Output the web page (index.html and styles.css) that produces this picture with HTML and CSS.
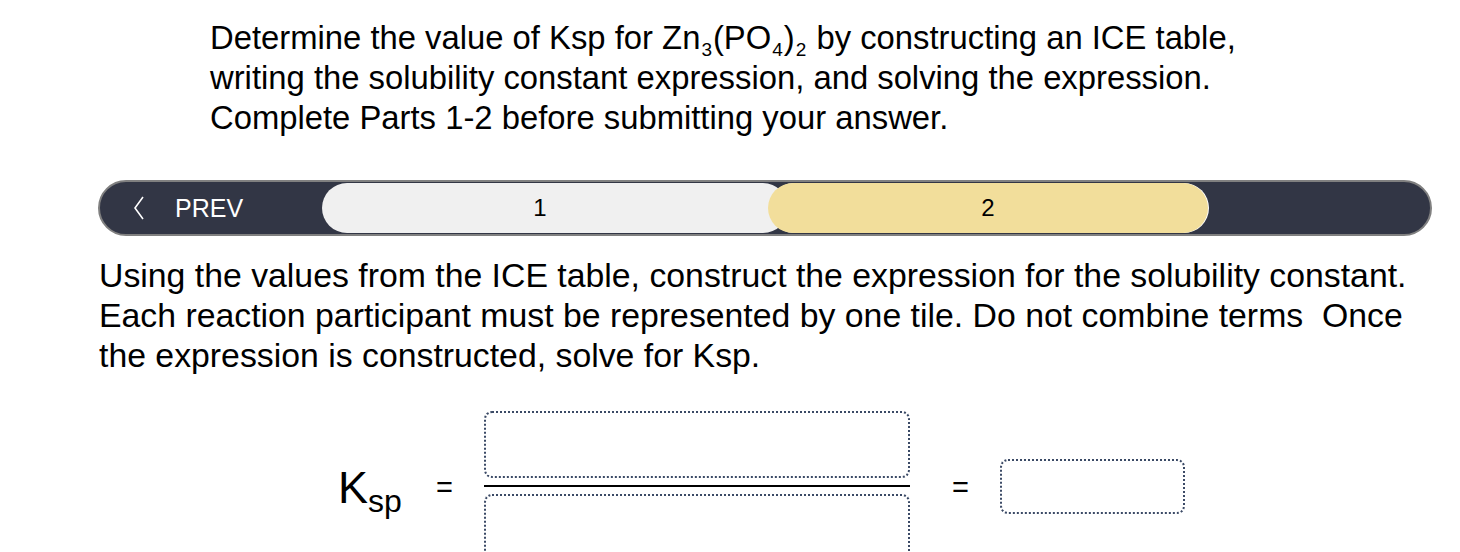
FILE: index.html
```html
<!DOCTYPE html>
<html>
<head>
<meta charset="utf-8">
<link rel="stylesheet" href="styles.css">
</head>
<body>
<div class="page">
  <p class="intro">Determine the value of Ksp for Zn<sub>3</sub>(PO<sub>4</sub>)<sub>2</sub> by constructing an ICE table,<br>writing the solubility constant expression, and solving the expression.<br>Complete Parts 1-2 before submitting your answer.</p>

  <div class="stepbar">
    <div class="prev"><span class="chev"><svg width="12" height="24" viewBox="0 0 12 24"><path d="M10 1 L2 12 L10 23" fill="none" stroke="#fff" stroke-width="1.6"/></svg></span><span>PREV</span></div>
    <div class="steps">
      <div class="step step-done">1</div>
      <div class="step step-active">2</div>
    </div>
  </div>

  <p class="instr">Using the values from the ICE table, construct the expression for the solubility constant.<br>Each reaction participant must be represented by one tile. Do not combine terms&nbsp; Once<br>the expression is constructed, solve for Ksp.</p>

  <div class="expr">
    <div class="ksp">K<span class="sp">sp</span></div>
    <div class="eq eq1">=</div>
    <div class="frac">
      <div class="tile tile-num"></div>
      <div class="bar"></div>
      <div class="tile tile-den"></div>
    </div>
    <div class="eq eq2">=</div>
    <div class="tile tile-ans"></div>
  </div>
</div>
</body>
</html>
```

FILE: styles.css
```css
html, body {
  margin: 0;
  padding: 0;
  background: #fff;
}
body {
  font-family: "Liberation Sans", Arial, sans-serif;
  color: #000;
  width: 1460px;
  height: 552px;
  overflow: hidden;
}
.page {
  display: flex;
  flex-direction: column;
}
.intro {
  margin: 18px 0 0 210px;
  white-space: nowrap;
  font-size: 32.8px;
  line-height: 40px;
}
.intro sub {
  font-size: 19px;
  line-height: 0;
  vertical-align: -7px;
  margin: 0 1px;
}
.stepbar {
  margin: 42px 0 0 98px;
  width: 1330px;
  height: 52px;
  border: 2px solid #808080;
  border-radius: 28px;
  background: #323645;
  display: flex;
  align-items: center;
  overflow: hidden;
}
.prev {
  width: 222px;
  display: flex;
  align-items: center;
  color: #fff;
  font-size: 25px;
  box-sizing: border-box;
  padding-left: 33px;
  gap: 30px;
}
.chev {
  display: flex;
}
.steps {
  display: flex;
  height: 50px;
}
.step {
  height: 50px;
  display: flex;
  align-items: center;
  justify-content: center;
  font-size: 24px;
  border-radius: 25px;
}
.step-done {
  width: 466px;
  padding-right: 30px;
  box-sizing: border-box;
  background: #f0f0f0;
}
.step-active {
  width: 440px;
  margin-left: -20px;
  background: #f2de9b;
  box-shadow: 1px 0 0 #fff;
}
.instr {
  margin: 19px 0 0 99px;
  white-space: nowrap;
  font-size: 33.8px;
  line-height: 40px;
}
.expr {
  margin: 36px 0 0 338px;
  display: flex;
  align-items: flex-start;
}
.ksp {
  font-size: 45px;
  line-height: 1;
  width: 98px;
  margin-top: 54px;
}
.sp {
  font-size: 32px;
  vertical-align: -9px;
}
.eq {
  font-size: 29px;
  line-height: 1;
  margin-top: 62px;
}
.eq1 {
  width: 48px;
}
.frac {
  display: flex;
  flex-direction: column;
  width: 426px;
  gap: 7px;
}
.tile {
  border: 2px dotted #3b4a66;
  border-radius: 8px;
  box-sizing: border-box;
}
.tile-num {
  height: 67px;
}
.bar {
  height: 2px;
  background: #000;
}
.tile-den {
  height: 80px;
}
.eq2 {
  margin-left: 42px;
  width: 48px;
}
.tile-ans {
  width: 185px;
  height: 55px;
  margin-top: 48px;
}
```
